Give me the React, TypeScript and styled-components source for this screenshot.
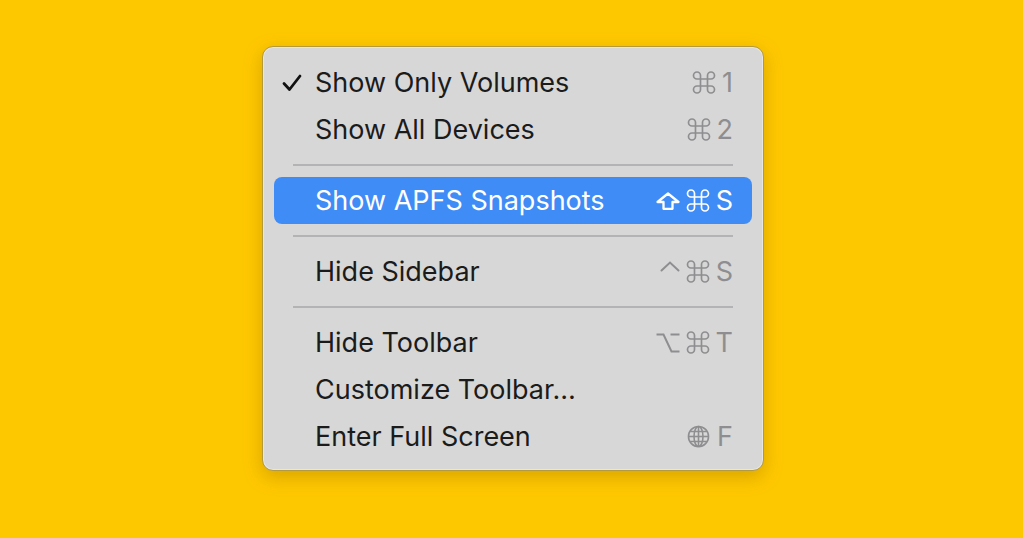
import styled, { createGlobalStyle } from "styled-components";

const GlobalStyle = createGlobalStyle`
  html, body {
    margin: 0;
    padding: 0;
    background: #fec800;
  }
  #root {
    width: 1023px;
    height: 538px;
  }
`;

const Page = styled.div`
  width: 1023px;
  height: 538px;
  display: flex;
  justify-content: center;
  align-items: flex-start;
  padding-top: 46px;
  box-sizing: border-box;
  background: #fec800;
  font-family: Inter, "Liberation Sans", sans-serif;
`;

const Menu = styled.div`
  width: 502px;
  margin-left: 3px;
  box-sizing: border-box;
  padding: 12px 11px 10px;
  background: #d7d7d8;
  border-radius: 11px;
  border: 1px solid #b59a3a;
  box-shadow: inset 0 0 0 1px #e6e6e6, 0 6px 18px rgba(150, 100, 0, 0.35);
  display: flex;
  flex-direction: column;
`;

const Row = styled.div<{ $active?: boolean }>`
  height: 47px;
  display: flex;
  align-items: center;
  padding: 0 19px 0 8px;
  border-radius: 8px;
  background: ${(p) => (p.$active ? "#3f8cf6" : "transparent")};
  color: ${(p) => (p.$active ? "#ffffff" : "#1b1b1b")};
  font-size: 27px;
`;

const Check = styled.span`
  width: 33px;
  display: flex;
  align-items: center;
`;

const Label = styled.span`
  flex: 1;
`;

const Keys = styled.span<{ $active?: boolean }>`
  display: flex;
  align-items: center;
  gap: 7px;
  color: ${(p) => (p.$active ? "#ffffff" : "#8e8e90")};
  font-size: 27px;

  svg {
    display: block;
  }
`;

const Glyph = styled.svg<{ $raise?: number }>`
  margin-bottom: ${(p) => p.$raise ?? 0}px;
  overflow: visible;
`;

const Separator = styled.div`
  height: 2px;
  margin: 11px 19px 11px 19px;
  background: #b3b3b6;
`;

const CheckMark = () => (
  <svg width="20" height="18" viewBox="0 0 20 18">
    <path
      d="M2 9.5 L7.5 15.5 L18 2"
      fill="none"
      stroke="#111"
      strokeWidth="2.8"
      strokeLinecap="round"
      strokeLinejoin="round"
    />
  </svg>
);

const Cmd = () => (
  <Glyph width="22" height="21" viewBox="3 3 18 18" fill="none" stroke="currentColor" strokeWidth="1.45">
    <path d="M15 6v12a3 3 0 1 0 3-3H6a3 3 0 1 0 3 3V6a3 3 0 1 0-3 3h12a3 3 0 1 0-3-3" />
  </Glyph>
);

const Shift = () => (
  <Glyph width="24" height="18" viewBox="0 0 24 18" fill="none" stroke="currentColor" strokeWidth="2.3" strokeLinejoin="round">
    <path d="M12 1.5 L22.5 10 H16.5 V16.8 H7.5 V10 H1.5 Z" />
  </Glyph>
);

const Ctrl = () => (
  <Glyph width="20" height="11" viewBox="0 0 20 11" $raise={10} fill="none" stroke="currentColor" strokeWidth="2" strokeLinecap="round">
    <path d="M1.5 9.5 L10 1.5 L18.5 9.5" />
  </Glyph>
);

const Opt = () => (
  <Glyph width="24" height="20" viewBox="0 0 24 20" fill="none" stroke="currentColor" strokeWidth="2">
    <path d="M0.5 1.5 H7.5 L15.5 18.5 H23.5 M14.5 1.5 H23.5" />
  </Glyph>
);

const Globe = () => (
  <Glyph width="23" height="23" viewBox="0 0 22 22" fill="none" stroke="currentColor" strokeWidth="1.5">
    <circle cx="11" cy="11" r="9.6" />
    <ellipse cx="11" cy="11" rx="4.3" ry="9.6" />
    <line x1="11" y1="1.4" x2="11" y2="20.6" />
    <line x1="1.4" y1="11" x2="20.6" y2="11" />
    <path d="M3.2 6.2 H18.8 M3.2 15.8 H18.8" />
  </Glyph>
);

type Item = {
  label: string;
  checked?: boolean;
  active?: boolean;
  keys?: React.ReactNode[];
};

const groups: Item[][] = [
  [
    { label: "Show Only Volumes", checked: true, keys: [<Cmd key="c" />, "1"] },
    { label: "Show All Devices", keys: [<Cmd key="c" />, "2"] },
  ],
  [
    {
      label: "Show APFS Snapshots",
      active: true,
      keys: [<Shift key="s" />, <Cmd key="c" />, "S"],
    },
  ],
  [{ label: "Hide Sidebar", keys: [<Ctrl key="t" />, <Cmd key="c" />, "S"] }],
  [
    { label: "Hide Toolbar", keys: [<Opt key="o" />, <Cmd key="c" />, "T"] },
    { label: "Customize Toolbar…" },
    { label: "Enter Full Screen", keys: [<Globe key="g" />, "F"] },
  ],
];

export default function App() {
  return (
    <>
      <GlobalStyle />
      <Page>
        <Menu>
          {groups.map((items, gi) => (
            <div key={gi}>
              {gi > 0 && <Separator />}
              {items.map((it) => (
                <Row key={it.label} $active={it.active}>
                  <Check>{it.checked && <CheckMark />}</Check>
                  <Label>{it.label}</Label>
                  {it.keys && <Keys $active={it.active}>{it.keys}</Keys>}
                </Row>
              ))}
            </div>
          ))}
        </Menu>
      </Page>
    </>
  );
}
